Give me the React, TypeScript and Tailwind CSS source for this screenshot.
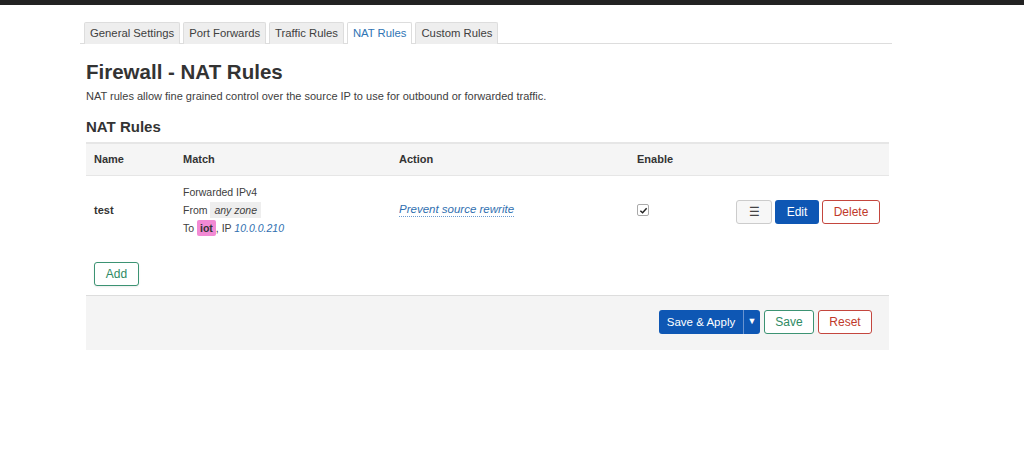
import React from 'react';

const tabs = ['General Settings', 'Port Forwards', 'Traffic Rules', 'NAT Rules', 'Custom Rules'];

export default function App() {
  return (
    <div className="min-h-[458px] w-full bg-white text-[#404040] font-['Liberation_Sans',Arial,sans-serif]">
      <div className="h-[5px] bg-[#222]" />

      <div className="ml-[80px] w-[812px] pt-[17px]">
        {/* tabs */}
        <ul className="flex gap-[3px] border-b border-[#ddd] pl-[4px]">
          {tabs.map(t => (
            <li
              key={t}
              className={
                'h-[22px] px-[5px] text-[11.3px] leading-[21px] border border-b-0 rounded-t-[2px] -mb-px ' +
                (t === 'NAT Rules'
                  ? 'bg-white border-[#ddd] text-[#2f75b5]'
                  : 'bg-[#eee] border-[#ddd] text-[#404040]')
              }
            >
              {t}
            </li>
          ))}
        </ul>

        <div className="pl-[6px] pr-[3px]">
          <h2 className="mt-[15px] text-[20.5px] leading-[26px] font-bold text-[#333]">Firewall - NAT Rules</h2>
          <p className="mt-[4px] text-[11px] leading-[14px] text-[#404040]">
            NAT rules allow fine grained control over the source IP to use for outbound or forwarded traffic.
          </p>

          <h3 className="mt-[15px] text-[15px] leading-[18px] font-bold text-[#333]">NAT Rules</h3>

          {/* table */}
          <div className="mt-[6px] text-[11px]">
            <div className="flex h-[34px] items-center bg-[#f5f5f5] border-t-2 border-b border-[#e6e6e6] font-bold text-[#333]">
              <div className="w-[89px] pl-[8px]">Name</div>
              <div className="w-[216px] pl-[8px]">Match</div>
              <div className="w-[238px] pl-[8px]">Action</div>
              <div className="w-[100px] pl-[8px]">Enable</div>
            </div>

            <div className="flex h-[72px] items-center">
              <div className="w-[89px] pl-[8px] pb-[4px] font-bold text-[#333]">test</div>
              <div className="w-[216px] pl-[8px] pb-[4px] leading-[18px] text-[#404040] text-[10.5px]">
                <div>Forwarded IPv4</div>
                <div>
                  From <span className="bg-[#eee] px-[4px] py-[2px] italic">any zone</span>
                </div>
                <div>
                  To <span className="bg-[#f28ad4] px-[3px] py-[2px] rounded-[2px] font-bold text-[#333]">iot</span>, IP{' '}
                  <span className="italic text-[#2f6fb0]">10.0.0.210</span>
                </div>
              </div>
              <div className="w-[238px] pl-[8px] pb-[4px]">
                <span className="italic text-[#2f6fb0] text-[11.5px] border-b border-dotted border-[#6a9bd0] pb-[1px]">
                  Prevent source rewrite
                </span>
              </div>
              <div className="w-[101px] pl-[8px] pb-[4px]">
                <span className="flex h-[12px] w-[12px] items-center justify-center border border-[#aaa] rounded-[2px] bg-white">
                  <svg width="9" height="9" viewBox="0 0 10 10">
                    <path d="M1.5 5.2 L4 7.5 L8.5 2.5" fill="none" stroke="#222" strokeWidth="1.6" />
                  </svg>
                </span>
              </div>
              <div className="flex flex-1 justify-end gap-[3px] pr-[9px]">
                <button className="h-[24px] w-[36px] rounded-[3px] border border-[#ccc] bg-[#f7f7f7] text-[12px] text-[#444]">☰</button>
                <button className="h-[24px] w-[44px] rounded-[3px] bg-[#0e57b4] text-[12px] text-white">Edit</button>
                <button className="h-[24px] w-[58px] rounded-[3px] border border-[#c4463e] bg-white text-[12px] text-[#c0392b]">Delete</button>
              </div>
            </div>

            <div className="pl-[8px] pt-[14px]">
              <button className="h-[24px] w-[45px] rounded-[3px] border border-[#3c9373] bg-white text-[12px] text-[#2e8a63] shadow-[0_1px_2px_rgba(0,0,0,0.08)]">
                Add
              </button>
            </div>
          </div>

          {/* footer */}
          <div className="mt-[9px] flex h-[55px] items-center justify-end gap-[4px] border-t border-[#ddd] bg-[#f4f4f4] pr-[17px] pb-[2px] text-[12px]">
            <div className="flex h-[24px] w-[101px] rounded-[3px] bg-[#0e57b4] text-white">
              <span className="flex-1 text-center text-[11.5px] leading-[24px]">Save &amp; Apply</span>
              <span className="flex w-[17px] items-center justify-center border-l border-[#6a94d0] text-[9px]">▼</span>
            </div>
            <button className="h-[24px] w-[50px] rounded-[3px] border border-[#3c9373] bg-white text-[#2e8a63]">Save</button>
            <button className="h-[24px] w-[54px] rounded-[3px] border border-[#c4463e] bg-white text-[#c0392b]">Reset</button>
          </div>
        </div>
      </div>
    </div>
  );
}
